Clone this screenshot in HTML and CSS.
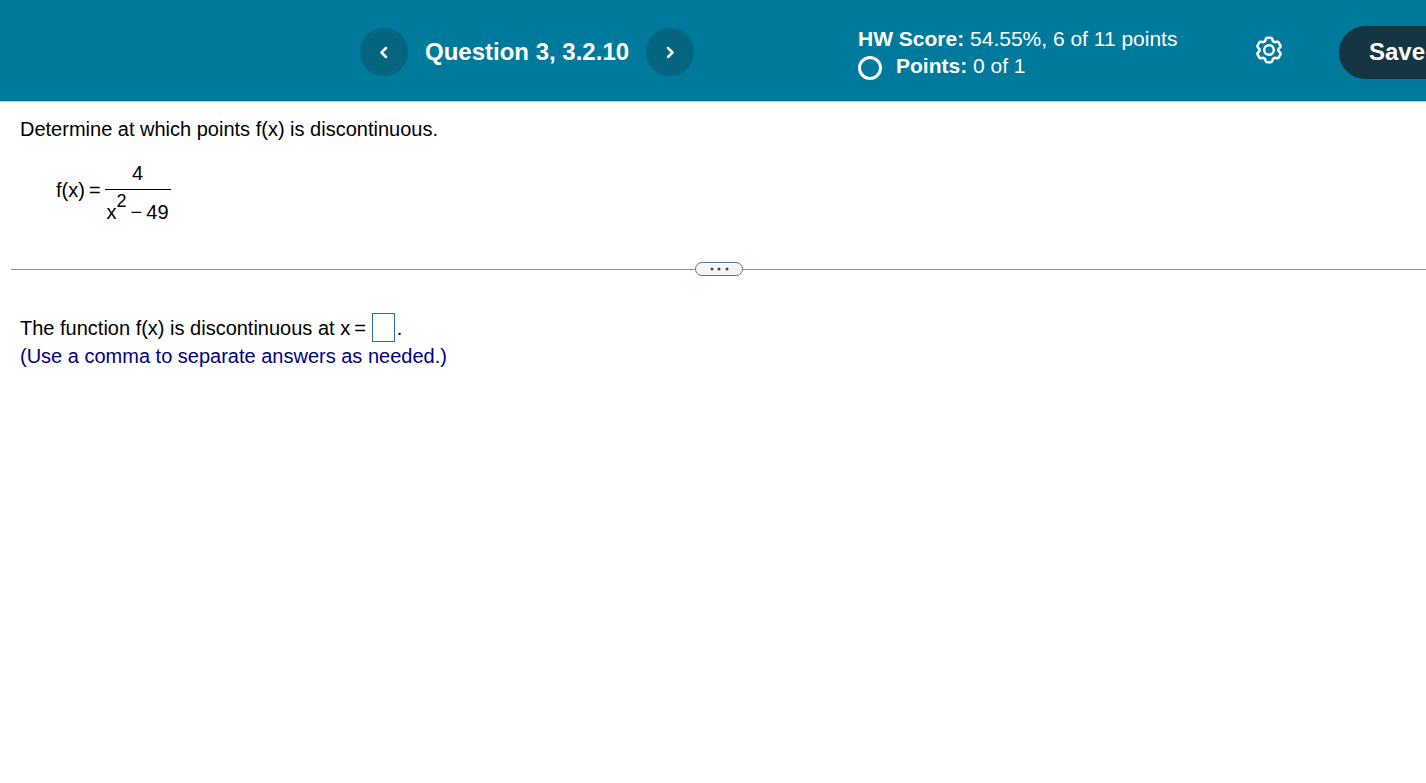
FILE: index.html
```html
<!DOCTYPE html>
<html lang="en">
<head>
    <meta charset="UTF-8">
    <meta name="viewport" content="width=device-width, initial-scale=1.0">
    <title>Question 3, 3.2.10</title>
    <link rel="stylesheet" href="styles.css">
</head>
<body>
    <header class="topbar">
        <nav class="question-nav">
            <button type="button" class="nav-btn" aria-label="Previous question">
                <svg width="12" height="16" viewBox="0 0 12 16"><path d="M8 4 L3.500 8.500 L8 13"/></svg>
            </button>
            <h1>Question 3, 3.2.10</h1>
            <button type="button" class="nav-btn" aria-label="Next question">
                <svg width="12" height="16" viewBox="0 0 12 16"><path d="M4 4 L8.500 8.500 L4 13"/></svg>
            </button>
        </nav>

        <div class="score">
            <div><b>HW Score:</b> 54.55%, 6 of 11 points</div>
            <div class="points"><span class="ring"></span><span><b>Points:</b> 0 of 1</span></div>
        </div>

        <button type="button" class="settings" aria-label="Settings">
            <svg width="28" height="28" viewBox="0 0 28 28">
                <path d="M10.1 5.2 L10.8 2.9 Q11.2 1.8 12.2 1.8 H15.8 Q16.8 1.8 17.2 2.9 L17.9 5.2 L19.7 6.2 L22 5.7 Q23.1 5.5 23.6 6.4 L25.4 9.5 Q25.9 10.4 25.1 11.3 L23.5 13 V15 L25.1 16.7 Q25.9 17.6 25.4 18.5 L23.6 21.6 Q23.1 22.5 22 22.3 L19.7 21.8 L17.9 22.8 L17.2 25.1 Q16.8 26.2 15.8 26.2 H12.2 Q11.2 26.2 10.8 25.1 L10.1 22.8 L8.3 21.8 L6 22.3 Q4.9 22.5 4.4 21.6 L2.6 18.5 Q2.1 17.6 2.9 16.7 L4.5 15 V13 L2.9 11.3 Q2.1 10.4 2.6 9.5 L4.4 6.4 Q4.9 5.5 6 5.7 L8.3 6.2 Z"/>
                <circle cx="14" cy="14" r="4.8"/>
            </svg>
        </button>

        <button type="button" class="save-btn">Save</button>
    </header>

    <main>
        <section class="question">
            <p>Determine at which points f(x) is discontinuous.</p>
            <div class="equation">
                <span>f(x)&thinsp;=</span>
                <div class="fraction">
                    <div class="numerator">4</div>
                    <div class="denominator">x<sup>2</sup>&thinsp;−&thinsp;49</div>
                </div>
            </div>
        </section>

        <div class="divider">
            <button type="button" class="divider-btn" aria-label="Resize panels">
                <svg width="20" height="4" viewBox="0 0 20 4">
                    <circle cx="3" cy="2" r="1.5"/>
                    <circle cx="10" cy="2" r="1.5"/>
                    <circle cx="18" cy="2" r="1.5"/>
                </svg>
            </button>
        </div>

        <section class="answer">
            <div class="answer-row">
                <label for="answer">The function f(x) is discontinuous at x&thinsp;=</label>
                <input type="text" id="answer">
                <span>.</span>
            </div>
            <p class="hint">(Use a comma to separate answers as needed.)</p>
        </section>
    </main>
</body>
</html>
```
FILE: styles.css
```css
* {
    box-sizing: border-box;
}

body {
    margin: 0;
    background: white;
    color: black;
    font-family: "Liberation Sans", Arial, sans-serif;
    font-size: 20px;
    line-height: 28px;
    overflow-x: hidden;
}

p {
    margin: 0;
}

button {
    padding: 0;
    border: none;
    font-family: inherit;
    cursor: pointer;
}

svg {
    display: block;
    fill: none;
    stroke: white;
    stroke-width: 2.5;
    stroke-linecap: round;
    stroke-linejoin: round;
}

.topbar {
    display: flex;
    align-items: center;
    padding: 25px 0 22px 360px;
    background: #007a9c;
    border-bottom: 1px solid #b8c8d2;
    color: white;
    overflow: hidden;
}

.question-nav {
    display: flex;
    align-items: center;
    gap: 17px;
}

.question-nav h1 {
    margin: 0;
    font-size: 24px;
    white-space: nowrap;
}

.nav-btn {
    display: flex;
    align-items: center;
    justify-content: center;
    width: 48px;
    height: 48px;
    border-radius: 50%;
    background: #05647f;
}

.score {
    flex: none;
    width: 397px;
    margin-left: auto;
    font-size: 21px;
    line-height: 27px;
}

.points {
    display: flex;
    gap: 14px;
    height: 27px;
}

.ring {
    width: 24px;
    height: 24px;
    margin-top: 4px;
    border: 3px solid white;
    border-radius: 50%;
}

.settings {
    flex: none;
    margin-right: 56px;
    padding-bottom: 4px;
    background: none;
}

.save-btn {
    flex: none;
    width: 120px;
    height: 53px;
    margin-right: -33px;
    padding-left: 30px;
    border-radius: 27px;
    background: #163543;
    color: white;
    font-size: 24px;
    font-weight: bold;
    text-align: left;
}

.question {
    padding: 13px 20px 40px;
}

.equation {
    display: flex;
    align-items: center;
    gap: 4px;
    margin: 15px 0 0 36px;
}

.fraction {
    text-align: center;
}

.numerator {
    padding-bottom: 1px;
    border-bottom: 1px solid black;
    line-height: 30px;
}

.denominator {
    padding: 11px 2px 0;
    line-height: 20px;
}

.denominator sup {
    font-size: 18px;
    line-height: 0;
    vertical-align: 12px;
}

.divider {
    display: flex;
    align-items: center;
    margin-left: 11px;
}

.divider::before,
.divider::after {
    content: "";
    flex: 1;
    border-top: 1px solid #86919d;
}

.divider-btn {
    display: flex;
    align-items: center;
    justify-content: center;
    width: 48px;
    height: 14px;
    border: 1px solid #5f7386;
    border-radius: 7px;
    background: #f3f5f7;
}

.divider-btn svg {
    fill: #3c4650;
    stroke: none;
}

.answer {
    padding: 37px 20px;
}

.answer-row {
    display: flex;
    align-items: center;
}

.answer-row input {
    width: 23px;
    height: 29px;
    margin: 0 2px 0 6px;
    padding: 0 2px;
    border: 1px solid #2f66c5;
    font: inherit;
}

.hint {
    color: #00007f;
}
```
